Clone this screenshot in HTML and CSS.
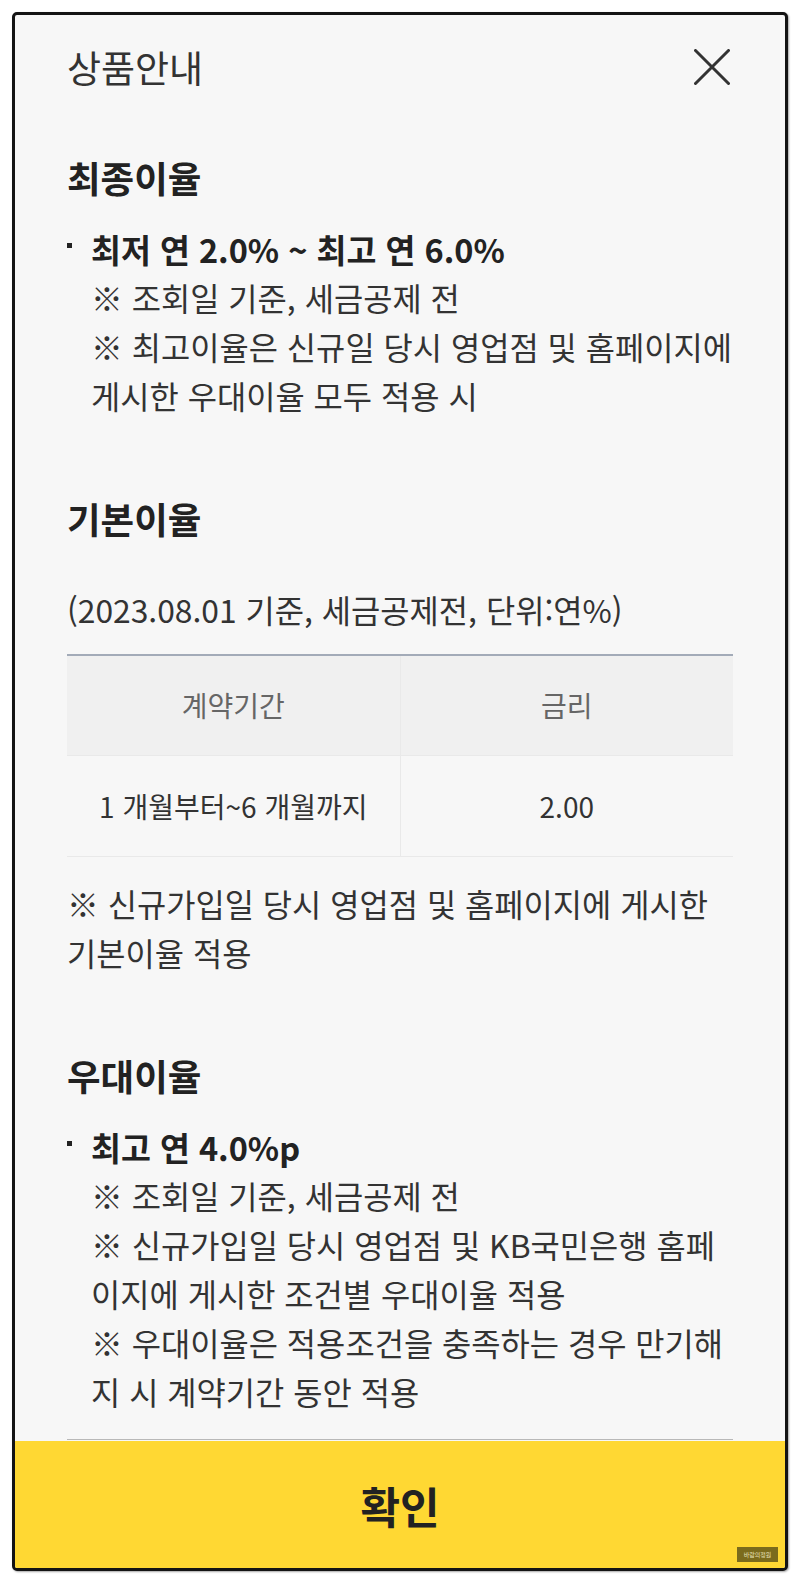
FILE: index.html
```html
<!DOCTYPE html>
<html lang="ko">

<head>
    <meta charset="UTF-8">
    <meta name="viewport" content="width=device-width, initial-scale=1.0">
    <title>상품안내</title>
    <link rel="stylesheet" href="styles.css">
</head>

<body>
    <div class="frame">
        <div class="content">
            <header class="top-bar">
                <h1>상품안내</h1>
                <button class="close-btn" aria-label="닫기">
                    <svg width="36" height="36" viewBox="0 0 36 36">
                        <path d="M1.5 1.5 L34.5 34.5 M34.5 1.5 L1.5 34.5" stroke="#333" stroke-width="3" stroke-linecap="round" fill="none" />
                    </svg>
                </button>
            </header>

            <section class="info-section first">
                <h2>최종이율</h2>
                <ul class="bullet-list">
                    <li>
                        <strong>최저 연 2.0% ~ 최고 연 6.0%</strong>
                        <p>※ 조회일 기준, 세금공제 전</p>
                        <p>※ 최고이율은 신규일 당시 영업점 및 홈페이지에 게시한 우대이율 모두 적용 시</p>
                    </li>
                </ul>
            </section>

            <section class="info-section">
                <h2>기본이율</h2>
                <p class="table-caption">(2023.08.01 기준, 세금공제전, 단위:연%)</p>
                <table class="rate-table">
                    <thead>
                        <tr>
                            <th>계약기간</th>
                            <th>금리</th>
                        </tr>
                    </thead>
                    <tbody>
                        <tr>
                            <td>1 개월부터~6 개월까지</td>
                            <td>2.00</td>
                        </tr>
                    </tbody>
                </table>
                <p class="note">※ 신규가입일 당시 영업점 및 홈페이지에 게시한 기본이율 적용</p>
            </section>

            <section class="info-section">
                <h2>우대이율</h2>
                <ul class="bullet-list last">
                    <li>
                        <strong>최고 연 4.0%p</strong>
                        <p>※ 조회일 기준, 세금공제 전</p>
                        <p>※ 신규가입일 당시 영업점 및 KB국민은행 홈페이지에 게시한 조건별 우대이율 적용</p>
                        <p>※ 우대이율은 적용조건을 충족하는 경우 만기해지 시 계약기간 동안 적용</p>
                    </li>
                </ul>
            </section>
        </div>

        <button class="confirm-btn">확인</button>
        <span class="watermark">바람의정원</span>
    </div>
</body>

</html>
```

FILE: styles.css
```css
* {
    box-sizing: border-box;
}

body {
    margin: 0;
    background-color: #ffffff;
    font-family: "Noto Sans CJK KR", "Noto Sans", sans-serif;
    color: #2b2b2b;
}

.frame {
    position: relative;
    display: flex;
    flex-direction: column;
    height: 1559px;
    margin: 12px;
    border: 3px solid #141414;
    border-radius: 5px;
    background-color: #f7f7f7;
    box-shadow: 1px 1px 2px rgba(0, 0, 0, 0.35);
    overflow: hidden;
}

.content {
    flex: 1;
    padding: 28px 52px 0;
    overflow: hidden;
}

.top-bar {
    display: flex;
    justify-content: space-between;
    align-items: center;
    height: 48px;
}

.top-bar h1 {
    margin: 0;
    font-size: 37px;
    font-weight: 400;
    line-height: 48px;
    color: #333;
}

.close-btn {
    display: flex;
    padding: 0;
    margin-right: 3px;
    border: none;
    background: none;
    cursor: pointer;
}

.info-section {
    margin-top: 77px;
}

.info-section.first {
    margin-top: 65px;
}

.info-section h2 {
    margin: 0;
    font-size: 36.5px;
    font-weight: 700;
    line-height: 44px;
    color: #222;
}

.bullet-list {
    list-style: none;
    margin: 24px 0 0;
    padding: 0;
}

.bullet-list li {
    position: relative;
    padding-left: 24px;
    font-size: 31.8px;
    line-height: 49px;
    word-break: break-all;
}

.bullet-list li::before {
    content: "";
    position: absolute;
    left: 0;
    top: 19px;
    width: 5px;
    height: 5px;
    background-color: #222;
}

.bullet-list strong {
    display: block;
    font-size: 32.5px;
    font-weight: 700;
    color: #222;
}

.bullet-list p {
    margin: 0;
    color: #333;
}

.bullet-list.last {
    margin-top: 24px;
    padding-bottom: 23px;
    border-bottom: 1px solid #b9b9b9;
}

.table-caption {
    margin: 44px 0 0;
    font-size: 31.8px;
    line-height: 49px;
    color: #333;
}

.rate-table {
    width: 100%;
    margin-top: 20px;
    border-collapse: collapse;
    border-top: 2px solid #a3abb8;
    table-layout: fixed;
}

.rate-table th,
.rate-table td {
    height: 101px;
    padding: 0;
    text-align: center;
    font-size: 28px;
    font-weight: 400;
    border-bottom: 1px solid #e9e9e9;
}

.rate-table th:first-child,
.rate-table td:first-child {
    width: 50%;
    border-right: 1px solid #e9e9e9;
}

.rate-table th {
    height: 100px;
    background-color: #f0f0f0;
    color: #666;
}

.rate-table td {
    color: #333;
}

.note {
    margin: 22px 0 0;
    font-size: 31.8px;
    line-height: 49px;
    color: #333;
    word-break: break-all;
}

.confirm-btn {
    flex: none;
    height: 127px;
    padding: 0;
    border: none;
    background-color: #ffd833;
    font-family: inherit;
    font-size: 43px;
    font-weight: 700;
    color: #222;
    cursor: pointer;
}

.watermark {
    position: absolute;
    right: 7px;
    bottom: 6px;
    width: 41px;
    height: 15px;
    background-color: #7b6b1c;
    font-size: 6px;
    line-height: 15px;
    text-align: center;
    color: #e8e0b8;
    overflow: hidden;
}
```
